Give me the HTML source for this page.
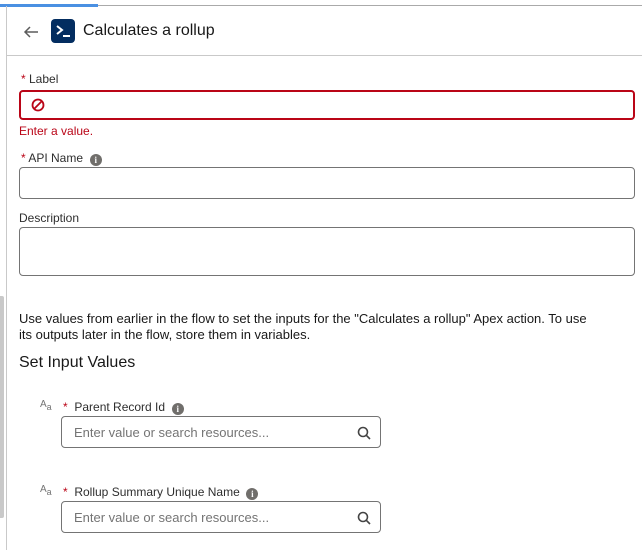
<!DOCTYPE html><html><head><style>
body{margin:0;width:642px;height:550px;background:#fff;font-family:"Liberation Sans",Arial,sans-serif;color:#181818;position:relative;overflow:hidden}
.a{position:absolute}
.lbl{font-size:12px;color:#2e2e2e}
.req{color:#ba0517}
.inp{position:absolute;border:1px solid #747474;border-radius:4px;box-sizing:border-box;background:#fff}
.info{display:inline-block;width:12px;height:12px;border-radius:50%;background:#706e6b;color:#fff;font-size:9px;font-weight:bold;text-align:center;line-height:12px;font-family:"Liberation Serif",serif;vertical-align:-1px}
.ph{position:absolute;left:12px;top:8px;font-size:13px;color:#747474}
</style></head><body>
<div class="a" style="left:0;top:5px;width:642px;height:1px;background:#aaa"></div>
<div class="a" style="left:0;top:4px;width:98px;height:3px;background:#4a90e2"></div>
<div class="a" style="left:6px;top:6px;width:1px;height:544px;background:#c9c9c9"></div>
<div class="a" style="left:0;top:296px;width:4px;height:222px;background:#c9c9c9;border-radius:0 2px 2px 0"></div>
<svg class="a" style="left:23px;top:25px" width="16" height="14" viewBox="0 0 16 14"><path d="M15 7H2M7 2L2 7l5 5" stroke="#5c5c5c" stroke-width="1.5" fill="none"/></svg>
<div class="a" style="left:51px;top:19px;width:24px;height:24px;background:#032d60;border-radius:4px"></div>
<svg class="a" style="left:51px;top:19px" width="24" height="24"><path d="M6 7l5 4-5 4" stroke="#fff" stroke-width="2" fill="none"/><path d="M12 17h7" stroke="#fff" stroke-width="2"/></svg>
<div class="a" style="left:83px;top:22px;font-size:16px">Calculates a rollup</div>
<div class="a" style="left:7px;top:55px;width:635px;height:1px;background:#c9c9c9"></div>

<div class="a lbl" style="left:21px;top:72px"><span class="req">*</span> Label</div>
<div class="inp" style="left:19px;top:90px;width:616px;height:30px;border:2px solid #ba0517"></div>
<svg class="a" style="left:31px;top:98px" width="14" height="14"><circle cx="7" cy="7" r="5.5" stroke="#ba0517" stroke-width="1.8" fill="none"/><path d="M3 11L11 3" stroke="#ba0517" stroke-width="1.8"/></svg>
<div class="a" style="left:19px;top:124px;font-size:12px;color:#ba0517">Enter a value.</div>

<div class="a lbl" style="left:21px;top:151px"><span class="req">*</span> API Name &nbsp;<span class="info">i</span></div>
<div class="inp" style="left:19px;top:167px;width:616px;height:32px"></div>
<div class="a lbl" style="left:19px;top:211px">Description</div>
<div class="inp" style="left:19px;top:227px;width:616px;height:49px"></div>

<div class="a" style="left:19px;top:311px;font-size:13px;line-height:16px;width:615px;white-space:nowrap">Use values from earlier in the flow to set the inputs for the "Calculates a rollup" Apex action. To use<br>its outputs later in the flow, store them in variables.</div>
<div class="a" style="left:19px;top:354px;font-size:16px">Set Input Values</div>

<div class="a" style="left:40px;top:399px;font-size:10px;color:#747474">A<sub style="font-size:9px">a</sub></div>
<div class="a lbl" style="left:63px;top:400px"><span class="req">*</span>&nbsp; Parent Record Id &nbsp;<span class="info">i</span></div>
<div class="inp" style="left:61px;top:416px;width:320px;height:32px"><span class="ph">Enter value or search resources...</span>
<svg class="a" style="left:295px;top:9px" width="14" height="14"><circle cx="6" cy="6" r="4.5" stroke="#444" stroke-width="1.6" fill="none"/><path d="M9.3 9.3L13 13" stroke="#444" stroke-width="1.6"/></svg></div>

<div class="a" style="left:40px;top:484px;font-size:10px;color:#747474">A<sub style="font-size:9px">a</sub></div>
<div class="a lbl" style="left:63px;top:485px"><span class="req">*</span>&nbsp; Rollup Summary Unique Name &nbsp;<span class="info">i</span></div>
<div class="inp" style="left:61px;top:501px;width:320px;height:32px"><span class="ph">Enter value or search resources...</span>
<svg class="a" style="left:295px;top:9px" width="14" height="14"><circle cx="6" cy="6" r="4.5" stroke="#444" stroke-width="1.6" fill="none"/><path d="M9.3 9.3L13 13" stroke="#444" stroke-width="1.6"/></svg></div>
</body></html>
